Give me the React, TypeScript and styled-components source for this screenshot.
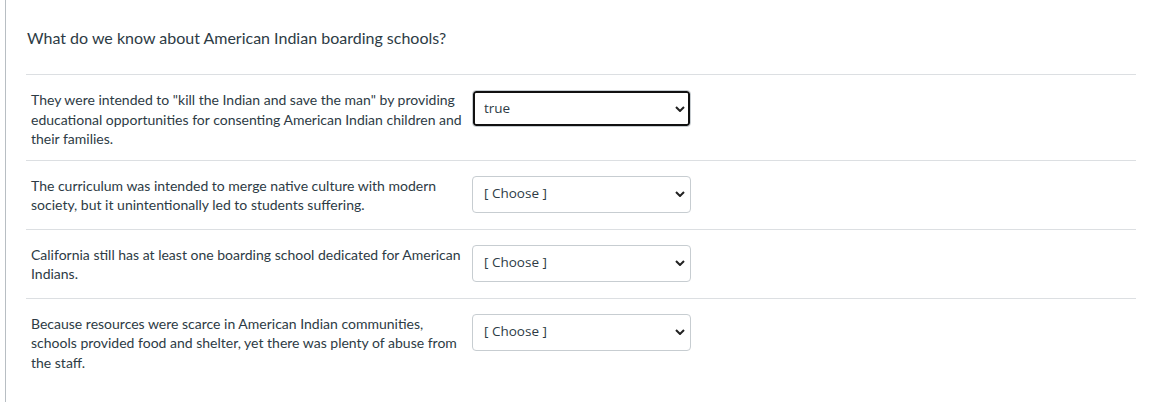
import React from "react";
import styled, { createGlobalStyle } from "styled-components";

const GlobalStyle = createGlobalStyle`
  html, body {
    margin: 0;
    padding: 0;
    background: #fff;
  }
  body {
    font-family: Lato, "Noto Sans", "Liberation Sans", sans-serif;
    color: #2d3b45;
  }
`;

const chevron =
  "data:image/svg+xml;utf8," +
  encodeURIComponent(
    '<svg xmlns="http://www.w3.org/2000/svg" width="10" height="6" viewBox="0 0 10 6"><path d="M1 1l4 4 4-4" fill="none" stroke="#222" stroke-width="2"/></svg>'
  );

const QuizFrame = styled.div`
  margin-left: 5px;
  border-left: 1px solid #b8bec3;
  min-height: 402px;
  box-sizing: border-box;
  padding: 0 17px 0 20px;
`;

const QuestionText = styled.div`
  font-size: 16px;
  line-height: 22px;
  color: #2d3b45;
  padding: 27px 0 25px 1px;
  border-bottom: 1px solid #dcdfe2;
`;

const AnswerRow = styled.div`
  display: flex;
  align-items: flex-start;
  padding: 15px 0 11px 5px;
  border-bottom: 1px solid #dcdfe2;

  &:last-child {
    border-bottom: none;
  }
`;

const AnswerLabel = styled.div`
  width: 436px;
  font-size: 14px;
  line-height: 19.5px;
  color: #2d3b45;
`;

const AnswerSelect = styled.select<{ $focused?: boolean }>`
  appearance: none;
  -webkit-appearance: none;
  margin: 0 0 5px 5px;
  width: 219px;
  height: 37px;
  box-sizing: border-box;
  padding: 0 24px 2px 11px;
  font-family: "Open Sans", "Noto Sans", sans-serif;
  font-size: 13.5px;
  color: #2d3b45;
  background: #fff url("${chevron}") no-repeat right 5px center;
  border: 1px solid #c7cdd1;
  border-radius: 4px;
  box-shadow: ${(p) => (p.$focused ? "inset 0 0 0 2px #111" : "none")};
  outline: none;
`;

type TAnswer = {
  text: string;
  value: string;
};

const answers: TAnswer[] = [
  {
    text: 'They were intended to "kill the Indian and save the man" by providing educational opportunities for consenting American Indian children and their families.',
    value: "true",
  },
  {
    text: "The curriculum was intended to merge native culture with modern society, but it unintentionally led to students suffering.",
    value: "",
  },
  {
    text: "California still has at least one boarding school dedicated for American Indians.",
    value: "",
  },
  {
    text: "Because resources were scarce in American Indian communities, schools provided food and shelter, yet there was plenty of abuse from the staff.",
    value: "",
  },
];

const App: React.FC = () => {
  return (
    <>
      <GlobalStyle />
      <QuizFrame>
        <QuestionText>
          What do we know about American Indian boarding schools?
        </QuestionText>
        {answers.map((a, i) => (
          <AnswerRow key={i}>
            <AnswerLabel>{a.text}</AnswerLabel>
            <AnswerSelect $focused={a.value !== ""} defaultValue={a.value}>
              <option value="">[ Choose ]</option>
              <option value="true">true</option>
              <option value="false">false</option>
            </AnswerSelect>
          </AnswerRow>
        ))}
      </QuizFrame>
    </>
  );
};

export default App;
